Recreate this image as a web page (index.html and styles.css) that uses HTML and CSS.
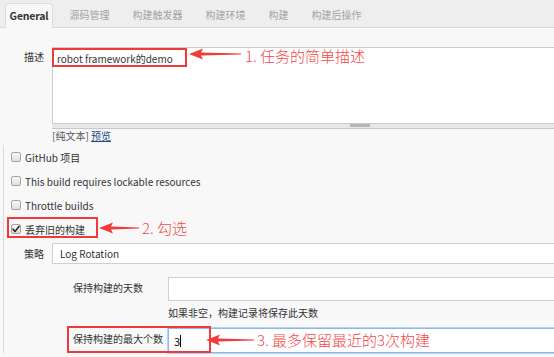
FILE: index.html
```html
<!DOCTYPE html>
<html lang="zh-CN">
<head>
<meta charset="utf-8">
<title>General</title>
<link rel="stylesheet" href="styles.css">
</head>
<body>
<div class="tabbar">
  <div class="tab active">General</div>
  <div class="tab">源码管理</div>
  <div class="tab">构建触发器</div>
  <div class="tab">构建环境</div>
  <div class="tab">构建</div>
  <div class="tab">构建后操作</div>
</div>

<div class="form">
  <div class="desc-row">
    <div class="label">描述</div>
    <div class="field">
      <div class="textarea">robot framework的demo</div>
      <div class="grip"><span class="handle"></span></div>
      <div class="preview">[纯文本] <a class="link">预览</a></div>
    </div>
  </div>

  <div class="section">
    <div class="check-row"><span class="cb"></span><span>GitHub 项目</span></div>
    <div class="check-row"><span class="cb"></span><span>This build requires lockable resources</span></div>
    <div class="check-row"><span class="cb"></span><span>Throttle builds</span></div>
    <div class="check-row"><span class="cb checked"><svg viewBox="0 0 10 10" width="10" height="10"><path d="M2 5.2 L4 7.4 L8 2.4" fill="none" stroke="#2a2a2a" stroke-width="1.6" stroke-linecap="round" stroke-linejoin="round"/></svg></span><span>丢弃旧的构建</span></div>

    <div class="strategy-row">
      <div class="label slabel">策略</div>
      <div class="select">Log Rotation</div>
    </div>

    <div class="nested">
      <div class="nrow">
        <div class="nlabel">保持构建的天数</div>
        <div class="input"></div>
      </div>
      <div class="nhint">如果非空，构建记录将保存此天数</div>
      <div class="nrow nrow-focus">
        <div class="nlabel">保持构建的最大个数</div>
        <div class="input focus">3<span class="caret"></span></div>
      </div>
    </div>
  </div>
</div>

<div class="mark mark1"></div>
<div class="mark mark2"></div>
<div class="mark mark3"></div>

<svg class="arrow arrow1" viewBox="0 0 52 12" width="52" height="12"><polygon points="0,6 14,0.5 12,4.6 52,5.6 52,6.4 12,7.4 14,11.5" fill="#f23c3c"/></svg>
<svg class="arrow arrow2" viewBox="0 0 40 12" width="40" height="12"><polygon points="0,6 14,0.5 12,4.6 40,5.6 40,6.4 12,7.4 14,11.5" fill="#f23c3c"/></svg>
<svg class="arrow arrow3" viewBox="0 0 48 12" width="48" height="12"><polygon points="0,6 14,0.5 12,4.6 48,5.6 48,6.4 12,7.4 14,11.5" fill="#f23c3c"/></svg>

<div class="note note1">1. 任务的简单描述</div>
<div class="note note2">2. 勾选</div>
<div class="note note3">3. 最多保留最近的3次构建</div>
</body>
</html>
```

FILE: styles.css
```css
html, body {
  margin: 0;
  padding: 0;
  overflow: hidden;
}

body {
  position: relative;
  width: 554px;
  height: 357px;
  background: #f8f8f8;
  font-family: "Noto Sans CJK SC", "Noto Sans", sans-serif;
  font-size: 10px;
  color: #333;
}

.tabbar {
  display: flex;
  align-items: flex-end;
  height: 27px;
  padding-left: 5px;
  background: #eeeeee;
  border-bottom: 1px solid #d9d9d9;
}

.tab {
  padding: 0 11.5px;
  line-height: 24px;
  color: #a3a3a3;
}

.tab.active {
  box-sizing: border-box;
  width: 48px;
  height: 25px;
  padding: 0;
  margin-right: 5px;
  margin-bottom: -1px;
  background: #f8f8f8;
  border: 1px solid #dcdcdc;
  border-bottom: none;
  border-radius: 4px 4px 0 0;
  font-size: 10.5px;
  font-weight: bold;
  text-align: center;
  letter-spacing: -0.2px;
  color: #333;
}

.form {
  padding-top: 19px;
}

.desc-row {
  display: flex;
}

.label {
  width: 44px;
  margin-right: 8px;
  margin-top: 3px;
  flex: none;
  text-align: right;
  line-height: 14px;
}

.field {
  flex: 1;
  margin-right: -20px;
}

.textarea {
  box-sizing: border-box;
  height: 77px;
  padding: 4px 4px;
  background: #fff;
  border: 1px solid #cccccc;
  line-height: 14px;
}

.grip {
  height: 4px;
  background: #e8e8e8;
  border-bottom: 1px solid #c8c8c8;
}

.handle {
  display: block;
  width: 20px;
  height: 3px;
  margin-left: 298px;
  background: #b5b5b5;
}

.preview {
  line-height: 13px;
  color: #555;
}

.link {
  color: #204a87;
  text-decoration: underline;
}

.section {
  margin-top: 3px;
  margin-left: 3px;
  border-left: 1px solid #dadada;
  padding-left: 7px;
}

.check-row {
  display: flex;
  align-items: center;
  height: 24px;
}

.cb {
  box-sizing: border-box;
  width: 10px;
  height: 10px;
  margin-right: 4px;
  border: 1px solid #a5a5a5;
  border-radius: 2px;
  background: linear-gradient(#f6f6f6, #dedede);
  display: flex;
  align-items: center;
  justify-content: center;
}

.cb svg {
  display: block;
  flex: none;
}

.strategy-row {
  display: flex;
  margin-top: 2px;
  margin-left: -7px;
}

.slabel {
  width: 40px;
  margin-top: 0;
  line-height: 21px;
}

.select {
  box-sizing: border-box;
  flex: 1;
  height: 21px;
  margin-right: -20px;
  padding-left: 7px;
  background: #fff;
  border: 1px solid #cfcfcf;
  line-height: 19px;
}

.nested {
  margin-top: 13px;
  padding-left: 62px;
}

.nrow {
  display: flex;
  height: 24px;
}

.nrow-focus {
  height: 25px;
  margin-top: 8px;
}

.nlabel {
  width: 95px;
  flex: none;
  line-height: 22px;
}

.input {
  box-sizing: border-box;
  flex: 1;
  margin-right: -20px;
  padding-left: 5px;
  background: #fff;
  border: 1px solid #d0d0d0;
  line-height: 22px;
  font-size: 11px;
}

.input.focus {
  border: 1px solid #8db9ea;
  box-shadow: 0 0 0 1px #b6d3f3;
  display: flex;
  align-items: center;
  color: #111;
}

.caret {
  display: inline-block;
  width: 1px;
  height: 12px;
  background: #000;
}

.nhint {
  margin-top: 5px;
  margin-left: 95px;
  line-height: 14px;
}

/* annotation overlays */
.mark {
  position: absolute;
  box-sizing: border-box;
  border: 2px solid #f03a3a;
}

.mark1 { left: 52px; top: 48px; width: 135px; height: 19px; }
.mark2 { left: 7px; top: 217px; width: 91px; height: 21px; }
.mark3 { left: 67px; top: 326px; width: 144px; height: 27px; }

.arrow {
  position: absolute;
  display: block;
}

.arrow1 { left: 189px; top: 48px; }
.arrow2 { left: 99px; top: 222px; }
.arrow3 { left: 206px; top: 334px; }

.note {
  position: absolute;
  font-family: "Noto Sans CJK SC", sans-serif;
  font-weight: 300;
  font-size: 15px;
  line-height: 18px;
  color: #f24848;
  white-space: nowrap;
}

.note1 { left: 245px; top: 47px; }
.note2 { left: 142px; top: 219px; }
.note3 { left: 257px; top: 331px; }
```
